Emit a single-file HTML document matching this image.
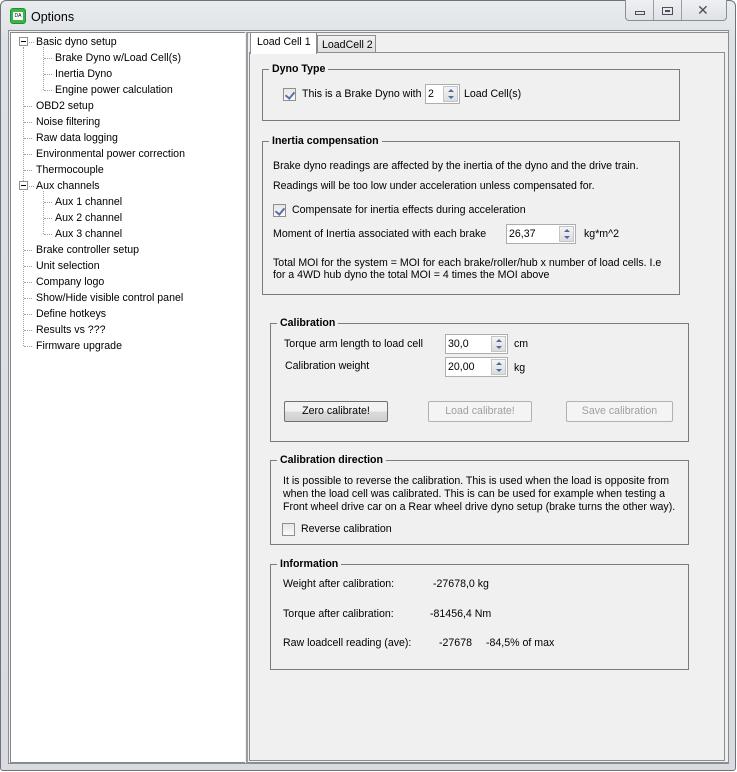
<!DOCTYPE html>
<html><head><meta charset="utf-8"><style>
*{margin:0;padding:0;box-sizing:border-box}
body{width:737px;height:772px;background:#fff;font-family:"Liberation Sans",sans-serif;font-size:10.6px;color:#000;position:relative;overflow:hidden}
.a{position:absolute;white-space:nowrap;line-height:14px}
.frame{position:absolute;left:0;top:0;width:736px;height:771px;background:linear-gradient(#e9ecef,#dde1e5 40px,#d8dce0);border:1px solid #6f7378;border-radius:6px 6px 3px 3px}
.client{position:absolute;left:8px;top:30px;width:721px;height:734px;background:#f0f0f0;border:1px solid #8a8d91}
.tree{position:absolute;left:10px;top:32px;width:235px;height:731px;background:#fff;border:1px solid #828790;border-right:none}
.tab{position:absolute;left:249px;top:52px;width:476px;height:709px;background:#f0f0f0;border:1px solid #8a8d91}
.pane{position:absolute;left:246px;top:32px;width:483px;height:731px;border:1px solid #8a8d91;border-left:2px solid #9a9da1}
.gb{position:absolute;border:1px solid #7b7b7b}
.gt{position:absolute;top:-8px;left:6px;background:#f0f0f0;padding:0 3px;font-weight:bold;line-height:14px}
.cb{position:absolute;width:13px;height:13px;border:1px solid #8f8f8f;background:linear-gradient(#e6e6e6,#fafafa)}
.cb.c::after{content:"";position:absolute;left:3px;top:1px;width:4px;height:7px;border:solid #5870a8;border-width:0 2px 2px 0;transform:rotate(40deg)}
.num{position:absolute;height:20px;background:#fff;border:1px solid #abadb3;line-height:18px;padding-left:2px}
.num .sp{position:absolute;right:1px;top:1px;width:15px;height:16px;background:linear-gradient(#f4f4f4,#dcdcdc);border:1px solid #c5c5c5}
.num .sp::before{content:"";position:absolute;left:4px;top:2px;border:3px solid transparent;border-bottom:3px solid #4a6aa5;border-top:none}
.num .sp::after{content:"";position:absolute;left:4px;top:9px;border:3px solid transparent;border-top:3px solid #4a6aa5;border-bottom:none}
.btn{position:absolute;height:21px;border:1px solid #707070;border-radius:2px;background:linear-gradient(#f2f2f2 50%,#dcdcdc 50%,#cfcfcf);text-align:center;line-height:19px}
.btn.d{border-color:#adb2b5;background:#f4f4f4;color:#a0a0a0}
.dl{position:absolute;border-left:1px dotted #a0a0a0}
.dh{position:absolute;border-top:1px dotted #a0a0a0;width:8px}
</style></head><body>
<div class="frame"></div>
<div style="position:absolute;left:10px;top:8px;width:16px;height:16px;background:#39b54a;border-radius:3px;border:1px solid #2a8a35"><div style="position:absolute;left:2px;top:3px;width:10px;height:8px;background:#fff;font-size:5px;line-height:8px;text-align:center;color:#000">DA</div></div>
<div class="a" style="left:31px;top:9px;font-size:12.5px;line-height:16px">Options</div>
<div style="position:absolute;left:625px;top:0px;width:102px;height:21px;border:1px solid #8a8e94;border-top:none;border-radius:0 0 4px 4px;background:linear-gradient(#eef0f2,#dfe2e6)"></div>
<div style="position:absolute;left:653px;top:0px;width:1px;height:20px;background:#9a9ea4"></div>
<div style="position:absolute;left:681px;top:0px;width:1px;height:20px;background:#9a9ea4"></div>
<div style="position:absolute;left:635px;top:11px;width:10px;height:4px;border:1px solid #4a4f58"></div>
<div style="position:absolute;left:662px;top:7px;width:11px;height:8px;border:1px solid #4a4f58"></div>
<div style="position:absolute;left:665px;top:10px;width:5px;height:2px;border:1px solid #4a4f58"></div>
<div class="a" style="left:697px;top:3px;font-size:14px;color:#4a4f58">✕</div>
<div class="client"></div>
<div class="tree"></div>
<div class="pane"></div>
<div class="tab"></div>
<div style="position:absolute;left:19px;top:37px;width:9px;height:9px;border:1px solid #919191;background:#fff"></div>
<div style="position:absolute;left:21px;top:41px;width:5px;height:1px;background:#000"></div>
<div style="position:absolute;left:19px;top:181px;width:9px;height:9px;border:1px solid #919191;background:#fff"></div>
<div style="position:absolute;left:21px;top:185px;width:5px;height:1px;background:#000"></div>
<div class="dl" style="left:23px;top:47px;height:134px"></div>
<div class="dl" style="left:23px;top:191px;height:155px"></div>
<div class="dl" style="left:43px;top:47px;height:43px"></div>
<div class="dl" style="left:43px;top:191px;height:43px"></div>
<div class="dh" style="left:29px;top:42px;width:5px"></div>
<div class="dh" style="left:44px;top:58px"></div><div class="dh" style="left:44px;top:74px"></div><div class="dh" style="left:44px;top:90px"></div>
<div class="dh" style="left:24px;top:106px"></div><div class="dh" style="left:24px;top:122px"></div><div class="dh" style="left:24px;top:138px"></div><div class="dh" style="left:24px;top:154px"></div><div class="dh" style="left:24px;top:170px"></div>
<div class="dh" style="left:29px;top:186px;width:5px"></div>
<div class="dh" style="left:44px;top:202px"></div><div class="dh" style="left:44px;top:218px"></div><div class="dh" style="left:44px;top:234px"></div>
<div class="dh" style="left:24px;top:250px"></div><div class="dh" style="left:24px;top:266px"></div><div class="dh" style="left:24px;top:282px"></div><div class="dh" style="left:24px;top:298px"></div><div class="dh" style="left:24px;top:314px"></div><div class="dh" style="left:24px;top:330px"></div><div class="dh" style="left:24px;top:346px"></div>
<div class="a" style="left:36px;top:35px">Basic dyno setup</div>
<div class="a" style="left:55px;top:51px">Brake Dyno w/Load Cell(s)</div>
<div class="a" style="left:55px;top:67px">Inertia Dyno</div>
<div class="a" style="left:55px;top:83px">Engine power calculation</div>
<div class="a" style="left:36px;top:99px">OBD2 setup</div>
<div class="a" style="left:36px;top:115px">Noise filtering</div>
<div class="a" style="left:36px;top:131px">Raw data logging</div>
<div class="a" style="left:36px;top:147px">Environmental power correction</div>
<div class="a" style="left:36px;top:163px">Thermocouple</div>
<div class="a" style="left:36px;top:179px">Aux channels</div>
<div class="a" style="left:55px;top:195px">Aux 1 channel</div>
<div class="a" style="left:55px;top:211px">Aux 2 channel</div>
<div class="a" style="left:55px;top:227px">Aux 3 channel</div>
<div class="a" style="left:36px;top:243px">Brake controller setup</div>
<div class="a" style="left:36px;top:259px">Unit selection</div>
<div class="a" style="left:36px;top:275px">Company logo</div>
<div class="a" style="left:36px;top:291px">Show/Hide visible control panel</div>
<div class="a" style="left:36px;top:307px">Define hotkeys</div>
<div class="a" style="left:36px;top:323px">Results vs ???</div>
<div class="a" style="left:36px;top:339px">Firmware upgrade</div>
<div style="position:absolute;left:317px;top:35px;width:59px;height:18px;border:1px solid #8a8d91;background:linear-gradient(#f2f2f2,#e0e0e0)"></div>
<div class="a" style="left:322px;top:38px">LoadCell 2</div>
<div style="position:absolute;left:250px;top:32px;width:67px;height:22px;border:1px solid #8a8d91;border-bottom:none;background:#fff"></div>
<div class="a" style="left:257px;top:35px">Load Cell 1</div>
<div class="gb" style="left:262px;top:69px;width:418px;height:52px"><div class="gt">Dyno Type</div></div>
<div class="cb c" style="left:283px;top:88px"></div>
<div class="a" style="left:302px;top:87px">This is a Brake Dyno with</div>
<div class="num" style="left:425px;top:84px;width:35px">2<div class="sp"></div></div>
<div class="a" style="left:464px;top:87px">Load Cell(s)</div>
<div class="gb" style="left:262px;top:141px;width:418px;height:154px"><div class="gt">Inertia compensation</div></div>
<div class="a" style="left:273px;top:159px">Brake dyno readings are affected by the inertia of the dyno and the drive train.</div>
<div class="a" style="left:273px;top:179px">Readings will be too low under acceleration unless compensated for.</div>
<div class="cb c" style="left:273px;top:204px"></div>
<div class="a" style="left:292px;top:203px">Compensate for inertia effects during acceleration</div>
<div class="a" style="left:273px;top:227px">Moment of Inertia associated with each brake</div>
<div class="num" style="left:506px;top:224px;width:70px">26,37<div class="sp"></div></div>
<div class="a" style="left:584px;top:227px">kg*m^2</div>
<div class="a" style="left:273px;top:256px">Total MOI for the system = MOI for each brake/roller/hub x number of load cells. I.e</div>
<div class="a" style="left:273px;top:268px">for a 4WD hub dyno the total MOI = 4 times the MOI above</div>
<div class="gb" style="left:270px;top:323px;width:419px;height:119px"><div class="gt">Calibration</div></div>
<div class="a" style="left:284px;top:337px">Torque arm length to load cell</div>
<div class="num" style="left:445px;top:334px;width:63px">30,0<div class="sp"></div></div>
<div class="a" style="left:514px;top:337px">cm</div>
<div class="a" style="left:285px;top:359px">Calibration weight</div>
<div class="num" style="left:445px;top:357px;width:63px">20,00<div class="sp"></div></div>
<div class="a" style="left:514px;top:361px">kg</div>
<div class="btn" style="left:284px;top:401px;width:104px">Zero calibrate!</div>
<div class="btn d" style="left:428px;top:401px;width:104px">Load calibrate!</div>
<div class="btn d" style="left:566px;top:401px;width:107px">Save calibration</div>
<div class="gb" style="left:270px;top:460px;width:419px;height:85px"><div class="gt">Calibration direction</div></div>
<div class="a" style="left:283px;top:474px">It is possible to reverse the calibration. This is used when the load is opposite from</div>
<div class="a" style="left:283px;top:487px">when the load cell was calibrated. This is can be used for example when testing a</div>
<div class="a" style="left:283px;top:500px">Front wheel drive car on a Rear wheel drive dyno setup (brake turns the other way).</div>
<div class="cb" style="left:282px;top:523px"></div>
<div class="a" style="left:301px;top:522px">Reverse calibration</div>
<div class="gb" style="left:270px;top:564px;width:419px;height:106px"><div class="gt">Information</div></div>
<div class="a" style="left:283px;top:577px">Weight after calibration:</div>
<div class="a" style="left:433px;top:577px">-27678,0 kg</div>
<div class="a" style="left:283px;top:607px">Torque after calibration:</div>
<div class="a" style="left:430px;top:607px">-81456,4 Nm</div>
<div class="a" style="left:283px;top:636px">Raw loadcell reading (ave):</div>
<div class="a" style="left:439px;top:636px">-27678</div>
<div class="a" style="left:486px;top:636px">-84,5% of max</div>
</body></html>
